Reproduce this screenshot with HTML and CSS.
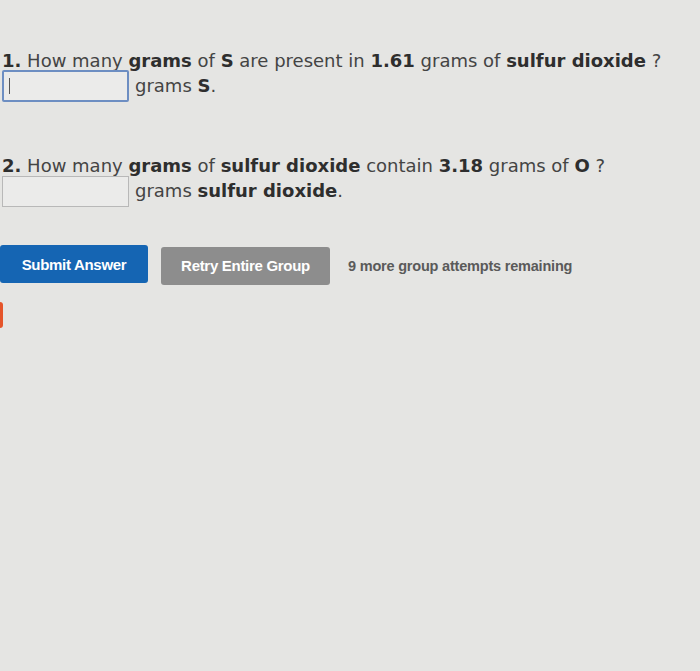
FILE: index.html
```html
<!DOCTYPE html>
<html>
<head>
<meta charset="utf-8">
<link rel="stylesheet" href="styles.css">
</head>
<body>
<div class="page">
  <div class="question q1">
    <div class="qline"><b>1.</b> How many <b>grams</b> of <b>S</b> are present in <b>1.61</b> grams of <b>sulfur dioxide</b> ?</div>
    <div class="aline"><span class="input focus"><span class="caret"></span></span><span class="unit">grams <b>S</b>.</span></div>
  </div>
  <div class="question q2">
    <div class="qline"><b>2.</b> How many <b>grams</b> of <b>sulfur dioxide</b> contain <b>3.18</b> grams of <b>O</b> ?</div>
    <div class="aline"><span class="input"></span><span class="unit">grams <b>sulfur dioxide</b>.</span></div>
  </div>
  <div class="actions">
    <button class="btn submit">Submit Answer</button>
    <button class="btn retry">Retry Entire Group</button>
    <span class="remaining">9 more group attempts remaining</span>
  </div>
  <div class="marker"></div>
</div>
</body>
</html>
```
FILE: styles.css
```css
html, body {
  margin: 0;
  padding: 0;
  background: #e5e5e3;
}
.page {
  width: 700px;
  height: 671px;
  padding-top: 48px;
  box-sizing: border-box;
  position: relative;
  font-family: "DejaVu Sans", Verdana, sans-serif;
  color: #444444;
  font-size: 18px;
}
b { color: #2e2e2e; }
.question { padding-left: 2px; }
.qline { line-height: 26px; white-space: nowrap; }
.aline {
  display: flex;
  align-items: center;
  gap: 6px;
  margin-top: -4px;
}
.input {
  width: 127px;
  height: 31px;
  border: 1px solid #b8b8b8;
  background: #ebebea;
  box-sizing: border-box;
  display: flex;
  align-items: center;
  padding-left: 5px;
}
.input.focus {
  border: 2px solid #6d8ec2;
  border-radius: 2px;
  height: 32px;
  width: 127px;
}
.caret {
  width: 1px;
  height: 16px;
  background: #555;
}
.unit { line-height: 32px; }
.q2 { margin-top: 51px; }
.actions {
  display: flex;
  align-items: center;
  margin-top: 38px;
  font-family: "Liberation Sans", Arial, sans-serif;
}
.btn {
  border: none;
  color: #fff;
  font-family: "Liberation Sans", Arial, sans-serif;
  font-weight: bold;
  font-size: 15px;
  height: 38px;
  border-radius: 3px;
  letter-spacing: -0.3px;
}
.submit {
  background: #1565b3;
  width: 148px;
  margin-bottom: 3px;
}
.retry {
  background: #8d8d8d;
  width: 169px;
  margin-left: 13px;
}
.remaining {
  margin-left: 18px;
  color: #5a5a5a;
  font-weight: bold;
  font-size: 14.5px;
  letter-spacing: -0.2px;
}
.marker {
  position: absolute;
  left: 0;
  top: 302px;
  width: 3px;
  height: 26px;
  background: #e5542a;
  border-radius: 0 3px 3px 0;
}
```
